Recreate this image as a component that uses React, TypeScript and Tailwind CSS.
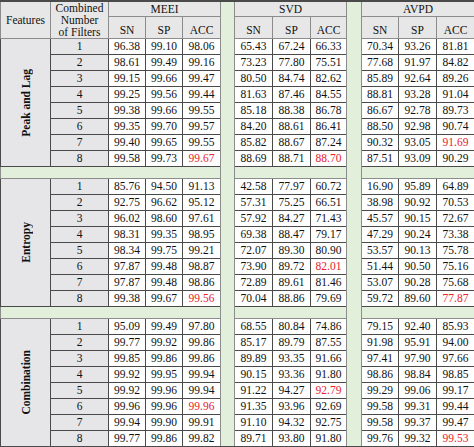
import React from "react";

const groups: { name: string; meei: string[][]; svd: string[][]; avpd: string[][]; red: number[] }[] = [
  {
    name: "Peak and Lag",
    meei: [
      ["96.38", "99.10", "98.06"],
      ["98.61", "99.49", "99.16"],
      ["99.15", "99.66", "99.47"],
      ["99.25", "99.56", "99.44"],
      ["99.38", "99.66", "99.55"],
      ["99.35", "99.70", "99.57"],
      ["99.40", "99.65", "99.55"],
      ["99.58", "99.73", "99.67"],
    ],
    svd: [
      ["65.43", "67.24", "66.33"],
      ["73.23", "77.80", "75.51"],
      ["80.50", "84.74", "82.62"],
      ["81.63", "87.46", "84.55"],
      ["85.18", "88.38", "86.78"],
      ["84.20", "88.61", "86.41"],
      ["85.82", "88.67", "87.24"],
      ["88.69", "88.71", "88.70"],
    ],
    avpd: [
      ["70.34", "93.26", "81.81"],
      ["77.68", "91.97", "84.82"],
      ["85.89", "92.64", "89.26"],
      ["88.81", "93.28", "91.04"],
      ["86.67", "92.78", "89.73"],
      ["88.50", "92.98", "90.74"],
      ["90.32", "93.05", "91.69"],
      ["87.51", "93.09", "90.29"],
    ],
    red: [7, 7, 6],
  },
  {
    name: "Entropy",
    meei: [
      ["85.76", "94.50", "91.13"],
      ["92.75", "96.62", "95.12"],
      ["96.02", "98.60", "97.61"],
      ["98.31", "99.35", "98.95"],
      ["98.34", "99.75", "99.21"],
      ["97.87", "99.48", "98.87"],
      ["97.87", "99.48", "98.86"],
      ["99.38", "99.67", "99.56"],
    ],
    svd: [
      ["42.58", "77.97", "60.72"],
      ["57.31", "75.25", "66.51"],
      ["57.92", "84.27", "71.43"],
      ["69.38", "88.47", "79.17"],
      ["72.07", "89.30", "80.90"],
      ["73.90", "89.72", "82.01"],
      ["72.89", "89.61", "81.46"],
      ["70.04", "88.86", "79.69"],
    ],
    avpd: [
      ["16.90", "95.89", "64.89"],
      ["38.98", "90.92", "70.53"],
      ["45.57", "90.15", "72.67"],
      ["47.29", "90.24", "73.38"],
      ["53.57", "90.13", "75.78"],
      ["51.44", "90.50", "75.16"],
      ["53.07", "90.28", "75.68"],
      ["59.72", "89.60", "77.87"],
    ],
    red: [7, 5, 7],
  },
  {
    name: "Combination",
    meei: [
      ["95.09", "99.49", "97.80"],
      ["99.77", "99.92", "99.86"],
      ["99.85", "99.86", "99.86"],
      ["99.92", "99.95", "99.94"],
      ["99.92", "99.96", "99.94"],
      ["99.96", "99.96", "99.96"],
      ["99.94", "99.90", "99.91"],
      ["99.77", "99.86", "99.82"],
    ],
    svd: [
      ["68.55", "80.84", "74.86"],
      ["85.17", "89.79", "87.55"],
      ["89.89", "93.35", "91.66"],
      ["90.15", "93.36", "91.80"],
      ["91.22", "94.27", "92.79"],
      ["91.35", "93.96", "92.69"],
      ["91.10", "94.32", "92.75"],
      ["89.71", "93.80", "91.80"],
    ],
    avpd: [
      ["79.15", "92.40", "85.93"],
      ["91.98", "95.91", "94.00"],
      ["97.41", "97.90", "97.66"],
      ["98.86", "98.84", "98.85"],
      ["99.29", "99.06", "99.17"],
      ["99.58", "99.31", "99.44"],
      ["99.58", "99.37", "99.47"],
      ["99.76", "99.32", "99.53"],
    ],
    red: [5, 4, 7],
  },
];

const dataTd = "border border-[#4a4a4a] bg-white text-center align-bottom leading-[14px] pb-[1px] p-0";
const hdrTd = "border border-[#8c8c8c] bg-[#e7e7e7] text-center p-0";
const green = "bg-[#e2efda] border border-[#8c8c8c] p-0";

function Cells({ vals, redRow, ri }: { vals: string[]; redRow: number; ri: number }) {
  return (
    <>
      {vals.map((v, ci) => {
        const isRed = ci === 2 && redRow === ri;
        return (
          <td key={ci} className={dataTd + (isRed ? " text-[#e8222c]" : " text-[#111]")}>
            {v}
          </td>
        );
      })}
    </>
  );
}

export default function App() {
  const totalRows = 2 + 8 * 3 + 2;
  return (
    <div className="w-[474px] h-[447px] overflow-hidden bg-white">
      <table
        className="table-fixed border-collapse w-[474px] text-[11.5px] text-[#111] border-t-2 border-b-[3px] border-t-[#4a4a4a] border-b-[#4a4a4a]"
        style={{ fontFamily: '"Liberation Serif", "Times New Roman", serif' }}
      >
        <colgroup>
          <col className="w-[50px]" />
          <col className="w-[58px]" />
          <col className="w-[37px]" />
          <col className="w-[37px]" />
          <col className="w-[38px]" />
          <col className="w-[14px]" />
          <col className="w-[38px]" />
          <col className="w-[38px]" />
          <col className="w-[36px]" />
          <col className="w-[15px]" />
          <col className="w-[37px]" />
          <col className="w-[38px]" />
          <col className="w-[38px]" />
        </colgroup>
        <tbody>
          <tr className="h-[14px]">
            <td rowSpan={2} className={hdrTd + " align-middle leading-[12px]"}>
              Features
            </td>
            <td rowSpan={2} className={hdrTd + " align-middle leading-[12px]"}>
              Combined
              <br />
              Number
              <br />
              of Filters
            </td>
            <td colSpan={3} className={hdrTd + " leading-[13px] pt-[1px]"}>
              MEEI
            </td>
            <td rowSpan={totalRows} className={green}></td>
            <td colSpan={3} className={hdrTd + " leading-[13px] pt-[1px]"}>
              SVD
            </td>
            <td rowSpan={totalRows} className={green}></td>
            <td colSpan={3} className={hdrTd + " leading-[13px] pt-[1px]"}>
              AVPD
            </td>
          </tr>
          <tr className="h-[22px]">
            {[0, 1, 2].map((g) => (
              <React.Fragment key={g}>
                <td className={hdrTd + " align-bottom leading-[14px] pb-[1px]"}>SN</td>
                <td className={hdrTd + " align-bottom leading-[14px] pb-[1px]"}>SP</td>
                <td className={hdrTd + " align-bottom leading-[14px] pb-[1px]"}>ACC</td>
              </React.Fragment>
            ))}
          </tr>
          {groups.map((g, gi) => (
            <React.Fragment key={g.name}>
              {gi > 0 && (
                <tr className="h-[12px]">
                  <td colSpan={5} className={green}></td>
                  <td colSpan={3} className={green}></td>
                  <td colSpan={3} className={green}></td>
                </tr>
              )}
              {g.meei.map((m, ri) => (
                <tr key={ri} className="h-[16px]">
                  {ri === 0 && (
                    <td rowSpan={8} className="border border-[#4a4a4a] bg-[#e6e5e8] p-0 align-middle text-center">
                      <div className="flex items-center justify-center">
                        <span className="[writing-mode:vertical-rl] rotate-180 font-bold text-[11.5px] leading-[12px] whitespace-nowrap">
                          {g.name}
                        </span>
                      </div>
                    </td>
                  )}
                  <td className="border border-[#4a4a4a] bg-[#e6e5e8] text-center align-bottom leading-[14px] pb-[1px] p-0">
                    {ri + 1}
                  </td>
                  <Cells vals={m} redRow={g.red[0]} ri={ri} />
                  <Cells vals={g.svd[ri]} redRow={g.red[1]} ri={ri} />
                  <Cells vals={g.avpd[ri]} redRow={g.red[2]} ri={ri} />
                </tr>
              ))}
            </React.Fragment>
          ))}
        </tbody>
      </table>
    </div>
  );
}
